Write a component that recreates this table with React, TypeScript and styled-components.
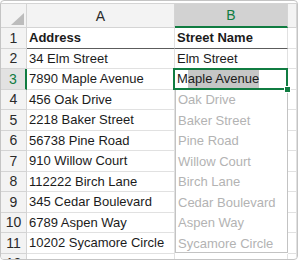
import React from 'react';
import styled, { createGlobalStyle } from 'styled-components';

const GREEN = '#107c41';

const GlobalStyle = createGlobalStyle`
	html, body {
		margin: 0;
		padding: 0;
		background: #ffffff;
	}
	body {
		font-family: 'Liberation Sans', Arial, sans-serif;
	}
`;

const Frame = styled.div`
	width: 298px;
	height: 260px;
	box-sizing: border-box;
	border: 1px solid #c4c4c4;
	border-radius: 4px;
	overflow: hidden;
	background: #ffffff;
	padding-top: 2px;
`;

const Sheet = styled.div`
	display: grid;
	grid-template-columns: 26px 148px 113px 1fr;
	grid-template-rows: 25px repeat(12, 20.5px);
	font-size: 13px;
	color: #1b1b1b;
`;

const Corner = styled.div`
	background: #f3f3f3;
	border-top: 1px solid #d4d4d4;
	border-right: 1px solid #d4d4d4;
	border-bottom: 1px solid #d4d4d4;
	display: flex;
	align-items: flex-end;
	justify-content: flex-end;
	padding: 0 2px 2px 0;
	box-sizing: border-box;
`;

const Triangle = styled.div`
	width: 0;
	height: 0;
	border-left: 13px solid transparent;
	border-bottom: 12px solid #bcbcbc;
`;

const ColHeader = styled.div<{ selected?: boolean }>`
	background: ${(p) => (p.selected ? '#d2d2d2' : '#f3f3f3')};
	color: ${(p) => (p.selected ? GREEN : '#2a2a2a')};
	border-top: 1px solid #d4d4d4;
	border-right: 1px solid #d4d4d4;
	border-bottom: ${(p) => (p.selected ? `2px solid ${GREEN}` : '1px solid #d4d4d4')};
	display: flex;
	align-items: center;
	justify-content: center;
	box-sizing: border-box;
	font-size: 14px;
`;

const RowHeader = styled.div<{ selected?: boolean }>`
	background: ${(p) => (p.selected ? '#e2e2e2' : '#f3f3f3')};
	color: ${(p) => (p.selected ? GREEN : '#2a2a2a')};
	border-right: ${(p) => (p.selected ? `2px solid ${GREEN}` : '1px solid #d4d4d4')};
	border-bottom: 1px solid #d4d4d4;
	display: flex;
	align-items: center;
	justify-content: center;
	box-sizing: border-box;
	font-size: 14px;
`;

const Cell = styled.div<{ bold?: boolean; underline?: boolean }>`
	border-right: 1px solid #e1e1e1;
	border-bottom: 1px solid ${(p) => (p.underline ? '#5c5c5c' : '#e1e1e1')};
	font-weight: ${(p) => (p.bold ? 700 : 400)};
	display: flex;
	align-items: center;
	padding-left: 2px;
	box-sizing: border-box;
	white-space: nowrap;
	overflow: hidden;
`;

const ActiveCell = styled(Cell)`
	position: relative;
	overflow: visible;
	z-index: 2;
	&::after {
		content: '';
		position: absolute;
		left: -2px;
		top: -1px;
		right: -1px;
		bottom: -1px;
		border: 2px solid ${GREEN};
		pointer-events: none;
	}
`;

const FillHandle = styled.span`
	position: absolute;
	right: -4px;
	bottom: -4px;
	width: 5px;
	height: 5px;
	background: ${GREEN};
	border: 1px solid #ffffff;
	z-index: 3;
`;

const Suggestion = styled.span`
	background: #c6c6c6;
	align-self: stretch;
	display: flex;
	align-items: center;
`;

const GhostList = styled.div`
	grid-column: 3;
	grid-row: 5 / 13;
	border: 1px solid #c3c3c3;
	border-top: none;
	background: #ffffff;
	display: grid;
	grid-template-rows: repeat(8, 20.5px);
	box-sizing: border-box;
	margin-bottom: 1px;
`;

const GhostItem = styled.div`
	color: #b3b3b3;
	display: flex;
	align-items: center;
	padding-left: 2px;
	white-space: nowrap;
`;

const addresses = [
	'34 Elm Street',
	'7890 Maple Avenue',
	'456 Oak Drive',
	'2218 Baker Street',
	'56738 Pine Road',
	'910 Willow Court',
	'112222 Birch Lane',
	'345 Cedar Boulevard',
	'6789 Aspen Way',
	'10202 Sycamore Circle',
];

const ghosts = addresses.slice(2).map((a) => a.replace(/^\d+ /, ''));

const App = () => {
	return (
		<>
			<GlobalStyle />
			<Frame>
				<Sheet>
					<Corner>
						<Triangle />
					</Corner>
					<ColHeader>A</ColHeader>
					<ColHeader selected>B</ColHeader>
					<ColHeader />

					<GhostList>
						{ghosts.map((g) => (
							<GhostItem key={g}>{g}</GhostItem>
						))}
					</GhostList>

					<RowHeader>1</RowHeader>
					<Cell bold underline>
						Address
					</Cell>
					<Cell bold underline>
						Street Name
					</Cell>
					<Cell />

					<RowHeader>2</RowHeader>
					<Cell>{addresses[0]}</Cell>
					<Cell>Elm Street</Cell>
					<Cell />

					<RowHeader selected>3</RowHeader>
					<Cell>{addresses[1]}</Cell>
					<ActiveCell>
						M<Suggestion>aple Avenue</Suggestion>
						<FillHandle />
					</ActiveCell>
					<Cell />

					{addresses.slice(2).map((a, i) => (
						<React.Fragment key={a}>
							<RowHeader>{i + 4}</RowHeader>
							<Cell>{a}</Cell>
							<Cell />
						</React.Fragment>
					))}

					<RowHeader>12</RowHeader>
					<Cell />
					<Cell />
					<Cell />
				</Sheet>
			</Frame>
		</>
	);
};

export default App;
